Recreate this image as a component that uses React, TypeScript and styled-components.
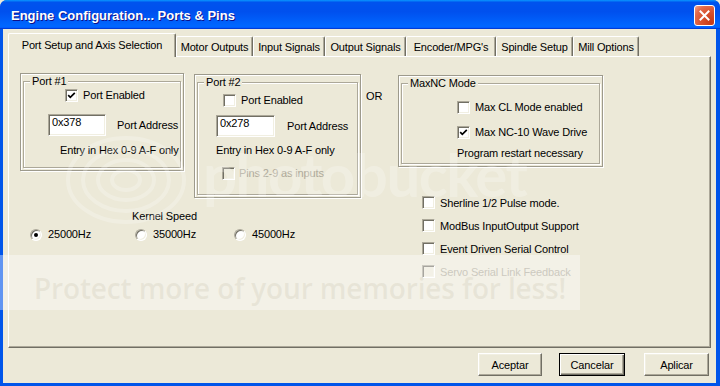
import React from "react";
import styled, { createGlobalStyle } from "styled-components";

const GlobalStyle = createGlobalStyle`
  html, body { margin: 0; padding: 0; width: 720px; height: 386px; overflow: hidden; background: #ECE9D8; }
  #root { width: 720px; height: 386px; }
`;

const UI_FONT = `"Liberation Sans", Arial, sans-serif`;

const Window = styled.div`
  position: relative;
  width: 720px;
  height: 386px;
  box-sizing: border-box;
  display: flex;
  flex-direction: column;
  background: #0055ea;
  border-radius: 7px 7px 0 0;
  overflow: hidden;
  font-family: ${UI_FONT};
  font-size: 11px;
  letter-spacing: -0.15px;
  color: #000;
`;

const TitleBar = styled.div`
  height: 29px;
  flex: none;
  display: flex;
  align-items: center;
  justify-content: space-between;
  padding: 0 5px 0 11px;
  background: linear-gradient(180deg, #0997ff 0, #0053ee 8%, #0050ee 40%, #0066ff 88%, #0066ff 93%, #005bff 95%, #003dd7 96%, #003dd7 100%);
`;

const TitleText = styled.div`
  color: #fff;
  font-family: ${UI_FONT};
  font-weight: bold;
  font-size: 13px;
  letter-spacing: 0;
  text-shadow: 1px 1px 0 #0f1089;
  padding-top: 1px;
`;

const CloseButton = styled.div`
  width: 21px;
  height: 21px;
  box-sizing: border-box;
  border: 1px solid #fff;
  border-radius: 3px;
  background: radial-gradient(circle at 85% 85%, #c63a17 0, #d8522f 45%, #e46c4c 75%, #f3a58d 100%);
  display: flex;
  align-items: center;
  justify-content: center;
  margin-top: 1px;
`;

const Client = styled.div`
  flex: 1;
  margin: 0 4px 3px 3px;
  background: #ece9d8;
  padding: 4px 5px 0 5px;
  display: flex;
  flex-direction: column;
`;

const TabStrip = styled.div`
  display: flex;
  align-items: flex-end;
  height: 23px;
  flex: none;
`;

const Tab = styled.div<{ $w: number; $active?: boolean }>`
  position: relative;
  z-index: ${p => (p.$active ? 1 : 0)};
  box-sizing: border-box;
  width: ${p => p.$w}px;
  height: ${p => (p.$active ? 24 : 20)}px;
  margin-bottom: ${p => (p.$active ? -1 : 0)}px;
  background: #ece9d8;
  border-top: 1px solid #fff;
  border-left: 1px solid #fff;
  border-right: 1px solid #716f64;
  box-shadow: inset -1px 0 0 #aca899;
  border-radius: 2px 2px 0 0;
  display: flex;
  align-items: center;
  justify-content: center;
  padding-bottom: ${p => (p.$active ? 2 : 0)}px;
  white-space: nowrap;
`;

const Panel = styled.div`
  box-sizing: border-box;
  height: 292px;
  flex: none;
  border-top: 1px solid #fff;
  border-left: 1px solid #fff;
  border-right: 1px solid #716f64;
  border-bottom: 1px solid #716f64;
  box-shadow: inset -1px -1px 0 #aca899;
  padding: 16px 0 0 11px;
  display: flex;
`;

const LeftCol = styled.div`
  width: 378px;
  flex: none;
  display: flex;
  flex-direction: column;
`;

const RightCol = styled.div`
  display: flex;
  flex-direction: column;
  padding-top: 2px;
`;

const TopRow = styled.div`
  display: flex;
  align-items: flex-start;
`;

const Frame = styled.div<{ $w: number; $h: number; $mt?: number; $ml?: number }>`
  box-sizing: border-box;
  flex: none;
  width: ${p => p.$w}px;
  height: ${p => p.$h}px;
  margin: ${p => p.$mt ?? 0}px 0 0 ${p => p.$ml ?? 0}px;
  border: 1px solid #9d9a8c;
  box-shadow: inset 1px 1px 0 #fff, 1px 1px 0 #fff;
  padding: 7px 2px 2px 2px;
  display: flex;
`;

const GroupBox = styled.div`
  position: relative;
  flex: 1;
  border: 1px solid #aca899;
  box-shadow: inset 1px 1px 0 #fff, 1px 1px 0 #fff;
  display: flex;
  flex-direction: column;
`;

const Legend = styled.span`
  position: absolute;
  top: -7px;
  left: 6px;
  padding: 0 2px;
  line-height: 13px;
  background: #ece9d8;
  white-space: nowrap;
`;

const Line = styled.div<{ $mt: number; $ml: number; $gap?: number; $disabled?: boolean }>`
  display: flex;
  align-items: center;
  gap: ${p => p.$gap ?? 5}px;
  margin: ${p => p.$mt}px 0 0 ${p => p.$ml}px;
  line-height: 13px;
  white-space: nowrap;
  color: ${p => (p.$disabled ? "#aca899" : "#000")};
`;

const Box = styled.span<{ $disabled?: boolean }>`
  box-sizing: border-box;
  flex: none;
  width: 13px;
  height: 13px;
  border: 1px solid;
  border-color: #aca899 #fff #fff #aca899;
  box-shadow: inset 1px 1px 0 #716f64, inset -1px -1px 0 #f1efe2;
  background: ${p => (p.$disabled ? "#ece9d8" : "#fff")};
  display: flex;
  align-items: center;
  justify-content: center;
`;

const Round = styled.span`
  box-sizing: border-box;
  flex: none;
  width: 12px;
  height: 12px;
  border-radius: 50%;
  border: 1px solid;
  border-color: #aca899 #fff #fff #aca899;
  box-shadow: inset 1px 1px 0 #716f64, inset -1px -1px 0 #f1efe2;
  background: #fff;
  display: flex;
  align-items: center;
  justify-content: center;
`;

const Dot = styled.span`
  width: 4px;
  height: 4px;
  border-radius: 50%;
  background: #000;
`;

const TextBox = styled.div<{ $w: number }>`
  box-sizing: border-box;
  width: ${p => p.$w}px;
  height: 22px;
  border: 1px solid;
  border-color: #aca899 #fff #fff #aca899;
  box-shadow: inset 1px 1px 0 #716f64, inset -1px -1px 0 #f1efe2;
  background: #fff;
  padding: 1px 3px;
  line-height: 13px;
`;

const OrLabel = styled.div`
  margin: 17px 0 0 5px;
  line-height: 13px;
`;

const KernelTitle = styled.div`
  margin: 12px 0 0 112px;
  line-height: 13px;
`;

const RadioRow = styled.div`
  display: flex;
  margin: 5px 0 0 10px;
`;

const RadioItem = styled.div<{ $w?: number }>`
  display: flex;
  align-items: center;
  gap: 6px;
  width: ${p => (p.$w ? `${p.$w}px` : "auto")};
  line-height: 13px;
`;

const CheckList = styled.div`
  display: flex;
  flex-direction: column;
  margin: 24px 0 0 24px;
`;

const ListRow = styled.div<{ $disabled?: boolean }>`
  display: flex;
  align-items: center;
  gap: 5px;
  height: 23px;
  white-space: nowrap;
  color: ${p => (p.$disabled ? "#aca899" : "#000")};
`;

const ButtonRow = styled.div`
  display: flex;
  justify-content: flex-end;
  margin-top: 5px;
  padding-right: 2px;
`;

const Button = styled.div<{ $w: number; $ml: number; $default?: boolean }>`
  box-sizing: border-box;
  width: ${p => p.$w}px;
  height: 23px;
  margin-left: ${p => p.$ml}px;
  display: flex;
  align-items: center;
  justify-content: center;
  background: #ece9d8;
  border: 1px solid;
  border-color: ${p => (p.$default ? "#000" : "#fff #716f64 #716f64 #fff")};
  box-shadow: ${p =>
    p.$default
      ? "inset 1px 1px 0 #fff, inset -1px -1px 0 #716f64, inset -2px -2px 0 #aca899"
      : "inset -1px -1px 0 #aca899, inset 1px 1px 0 #f1efe2"};
`;

/* watermark overlay */
const Watermark = styled.div`
  position: absolute;
  inset: 0;
  pointer-events: none;
`;

const WatermarkWord = styled.div`
  position: absolute;
  left: 203px;
  top: 138px;
  font-family: Lato, "Liberation Sans", sans-serif;
  font-weight: 700;
  font-size: 60px;
  letter-spacing: -1.5px;
  color: rgba(255, 255, 255, 0.24);
`;

const WatermarkLogo = styled.svg`
  position: absolute;
  left: 60px;
  top: 120px;
`;

const PromoBand = styled.div`
  position: absolute;
  left: 0;
  top: 255px;
  width: 580px;
  height: 55px;
  background: rgba(255, 255, 255, 0.38);
  box-sizing: border-box;
  padding: 17px 0 0 34px;
  font-family: "Open Sans", "Liberation Sans", sans-serif;
  font-weight: 600;
  font-size: 28px;
  line-height: 32px;
  color: rgba(190, 184, 160, 0.22);
  white-space: nowrap;
`;

const Check = () => (
  <svg width="9" height="9" viewBox="0 0 9 9">
    <polyline points="1.2,4.2 3.3,6.4 7.8,1.8" fill="none" stroke="#000" strokeWidth="1.7" />
  </svg>
);

const CheckBox = ({ checked, disabled }: { checked?: boolean; disabled?: boolean }) => (
  <Box $disabled={disabled}>{checked ? <Check /> : null}</Box>
);

const Radio = ({ checked }: { checked?: boolean }) => <Round>{checked ? <Dot /> : null}</Round>;

const tabs = [
  { label: "Port Setup and Axis Selection", w: 168, active: true },
  { label: "Motor Outputs", w: 77 },
  { label: "Input Signals", w: 72 },
  { label: "Output Signals", w: 81 },
  { label: "Encoder/MPG's", w: 90 },
  { label: "Spindle Setup", w: 77 },
  { label: "Mill Options", w: 66 },
];

const extraOptions = [
  { label: "Sherline 1/2 Pulse mode." },
  { label: "ModBus InputOutput Support" },
  { label: "Event Driven Serial Control" },
  { label: "Servo Serial Link Feedback", disabled: true },
];

export default function App() {
  return (
    <>
      <GlobalStyle />
      <Window>
        <TitleBar>
          <TitleText>Engine Configuration... Ports &amp; Pins</TitleText>
          <CloseButton>
            <svg width="11" height="11" viewBox="0 0 11 11">
              <path d="M1.5 1.5 L9.5 9.5 M9.5 1.5 L1.5 9.5" stroke="#fff" strokeWidth="2" strokeLinecap="square" />
            </svg>
          </CloseButton>
        </TitleBar>
        <Client>
          <TabStrip>
            {tabs.map(t => (
              <Tab key={t.label} $w={t.w} $active={t.active}>
                {t.label}
              </Tab>
            ))}
          </TabStrip>
          <Panel>
            <LeftCol>
              <TopRow>
                <Frame $w={164} $h={98}>
                  <GroupBox>
                    <Legend>Port #1</Legend>
                    <Line $mt={7} $ml={41}>
                      <CheckBox checked />
                      Port Enabled
                    </Line>
                    <Line $mt={12} $ml={24} $gap={11}>
                      <TextBox $w={58}>0x378</TextBox>
                      Port Address
                    </Line>
                    <Line $mt={8} $ml={36}>Entry in Hex 0-9 A-F only</Line>
                  </GroupBox>
                </Frame>
                <Frame $w={167} $h={124} $mt={1} $ml={10}>
                  <GroupBox>
                    <Legend>Port #2</Legend>
                    <Line $mt={11} $ml={25}>
                      <CheckBox />
                      Port Enabled
                    </Line>
                    <Line $mt={8} $ml={18} $gap={12}>
                      <TextBox $w={59}>0x278</TextBox>
                      Port Address
                    </Line>
                    <Line $mt={7} $ml={18}>Entry in Hex 0-9 A-F only</Line>
                    <Line $mt={10} $ml={24} $gap={4} $disabled>
                      <CheckBox disabled />
                      Pins 2-9 as inputs
                    </Line>
                  </GroupBox>
                </Frame>
                <OrLabel>OR</OrLabel>
              </TopRow>
              <KernelTitle>Kernel Speed</KernelTitle>
              <RadioRow>
                <RadioItem $w={105}>
                  <Radio checked />
                  25000Hz
                </RadioItem>
                <RadioItem $w={99}>
                  <Radio />
                  35000Hz
                </RadioItem>
                <RadioItem>
                  <Radio />
                  45000Hz
                </RadioItem>
              </RadioRow>
            </LeftCol>
            <RightCol>
              <Frame $w={205} $h={92}>
                <GroupBox>
                  <Legend>MaxNC Mode</Legend>
                  <Line $mt={17} $ml={55}>
                    <CheckBox />
                    Max CL Mode enabled
                  </Line>
                  <Line $mt={12} $ml={55}>
                    <CheckBox checked />
                    Max NC-10 Wave Drive
                  </Line>
                  <Line $mt={8} $ml={55}>Program restart necessary</Line>
                </GroupBox>
              </Frame>
              <CheckList>
                {extraOptions.map(o => (
                  <ListRow key={o.label} $disabled={o.disabled}>
                    <CheckBox disabled={o.disabled} />
                    {o.label}
                  </ListRow>
                ))}
              </CheckList>
            </RightCol>
          </Panel>
          <ButtonRow>
            <Button $w={64} $ml={0}>Aceptar</Button>
            <Button $w={66} $ml={17} $default>Cancelar</Button>
            <Button $w={65} $ml={19}>Aplicar</Button>
          </ButtonRow>
        </Client>
        <Watermark>
          <WatermarkLogo width="140" height="110" viewBox="0 0 140 110">
            <g fill="none" stroke="rgba(255,255,255,0.24)" strokeWidth="4">
              <ellipse cx="66" cy="60" rx="14" ry="10" />
              <ellipse cx="66" cy="60" rx="28" ry="20" />
              <ellipse cx="66" cy="60" rx="43" ry="31" />
              <ellipse cx="66" cy="60" rx="58" ry="42" />
            </g>
          </WatermarkLogo>
          <WatermarkWord>photobucket</WatermarkWord>
          <PromoBand>Protect more of your memories for less!</PromoBand>
        </Watermark>
      </Window>
    </>
  );
}
